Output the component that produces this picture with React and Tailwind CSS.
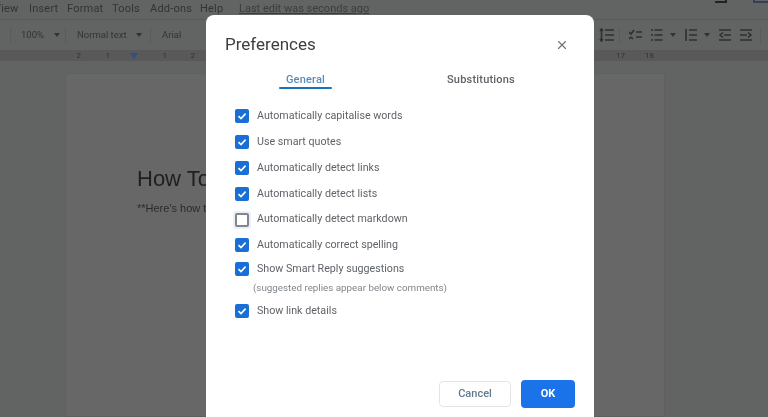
import { X } from 'lucide-react';

const menus = [
  { label: 'View', cls: 'w-[29px] -ml-[6px] mr-[6px]' },
  { label: 'Insert', cls: 'w-[38px]' },
  { label: 'Format', cls: 'w-[45px]' },
  { label: 'Tools', cls: 'w-[38px]' },
  { label: 'Add-ons', cls: 'w-[50px]' },
  { label: 'Help', cls: 'w-[39px]' },
];

const options = [
  { label: 'Automatically capitalise words', checked: true },
  { label: 'Use smart quotes', checked: true },
  { label: 'Automatically detect links', checked: true },
  { label: 'Automatically detect lists', checked: true },
  { label: 'Automatically detect markdown', checked: false },
  { label: 'Automatically correct spelling', checked: true },
];

function Caret() {
  return <span className="w-0 h-0 border-x-[3.5px] border-x-transparent border-t-[4px] border-t-[#333]" />;
}

function Separator({ cls }) {
  return <span className={`w-px h-4 bg-[#5a5b5a] ${cls}`} />;
}

// toolbar glyphs, drawn since the lucide ones are too thin and wide here
function ToolIcon({ d, cls }) {
  return (
    <svg width="13" height="14" viewBox="0 0 13 14" fill="none" stroke="currentColor" strokeWidth="1.6" className={cls}>
      <path d={d} />
    </svg>
  );
}

function Checkbox({ checked }) {
  if (!checked) {
    return (
      <span className="w-[14px] h-[14px] shrink-0 rounded-[2px] border-2 border-[#80868b] bg-white shadow-[0_0_0_2px_#e8f0fe]" />
    );
  }
  return (
    <span className="w-[14px] h-[14px] shrink-0 rounded-[2px] bg-[#1a6fd6] flex items-center justify-center">
      <svg width="10" height="10" viewBox="0 0 10 10" fill="none">
        <path d="M1.5 5.2 4 7.6 8.6 2.6" stroke="white" strokeWidth="1.6" />
      </svg>
    </span>
  );
}

function Option({ label, checked, rowCls }) {
  return (
    <div className={`flex items-center gap-2 ${rowCls}`}>
      <Checkbox checked={checked} />
      <span className="text-[10.7px] text-[#5f6368]">{label}</span>
    </div>
  );
}

export default function App() {
  return (
    <div className="relative w-[768px] h-[417px] overflow-hidden bg-[#626463] font-['Roboto',sans-serif]">
      {/* Docs behind the dialog */}
      <div className="flex flex-col h-full blur-[0.6px]">
        <div className="h-5 shrink-0 flex items-center text-[11px] tracking-[0.2px] text-[#333] border-b border-[#585958] relative">
          {menus.map((m) => (
            <span key={m.label} className={`shrink-0 ${m.cls}`}>{m.label}</span>
          ))}
          <span className="underline text-[11px] tracking-normal text-[#3c3c3c]">Last edit was seconds ago</span>
          <div className="ml-auto flex items-start gap-[26px] self-start">
            <span className="w-[12px] h-[3px] border-b-2 border-r-2 border-[#222]" />
            <span className="w-[15px] h-[3px] border-b-2 border-l-2 border-[#334155]" />
          </div>
        </div>

        <div className="h-[30px] shrink-0 flex items-center justify-between text-[9.5px] text-[#333]">
          <div className="flex items-center">
            <Separator cls="ml-[10px] mr-[10px]" />
            <span className="w-[33px]">100%</span>
            <Caret />
            <Separator cls="ml-[5px] mr-[11px]" />
            <span className="w-[59px]">Normal text</span>
            <Caret />
            <Separator cls="ml-[8px] mr-[11px]" />
            <span>Arial</span>
          </div>
          <div className="flex items-center text-[#2f2f2f]">
            <svg width="15" height="14" viewBox="0 0 15 14" fill="none" stroke="currentColor" strokeWidth="1.6">
              <path d="M2.5 1.5v11M1 3l1.5-2L4 3M1 11l1.5 2L4 11M6 2h9M6 7h9M6 12h9" />
            </svg>
            <Separator cls="ml-[5px] mr-[9px]" />
            <ToolIcon d="M0 4l2 2 3-4M7 4h6M0 11l2-2M2 9l2 2M7 9h6" cls="mr-[9px]" />
            <ToolIcon d="M0 2h2M0 7h2M0 12h2M3.5 2h8M3.5 7h8M3.5 12h8" cls="mr-[6px]" />
            <Caret />
            <span className="w-[9px]" />
            <ToolIcon d="M1 1v12M4 2h8M4 7h8M4 12h8" cls="mr-[6px]" />
            <Caret />
            <span className="w-[9px]" />
            <ToolIcon d="M0 2h12M5 7h7M0 12h12M4 4.5 1 7l3 2.5" cls="mr-[8px]" />
            <ToolIcon d="M0 2h12M0 7h7M0 12h12M8 4.5 11 7 8 9.5" />
            <Separator cls="ml-[7px] mr-[7px]" />
          </div>
        </div>

        <div className="h-[11px] shrink-0 bg-[#585958] flex items-center text-[8px] text-[#333]">
          <span className="w-[81px] shrink-0 text-right">2</span>
          <span className="w-[29px] shrink-0 text-right">1</span>
          <span className="w-[28px] shrink-0 flex justify-end">
            <span className="w-0 h-0 border-x-[4px] border-x-transparent border-t-[6px] border-t-[#2f4f85]" />
          </span>
          <span className="w-[29px] shrink-0 text-right">1</span>
          <span className="w-[28px] shrink-0 text-right">2</span>
          <span className="w-[430px] shrink-0 text-right">17</span>
          <span className="w-[29px] shrink-0 text-right">18</span>
        </div>

        <div className="flex-1 pt-[12px] pl-[65px] pr-[103px] flex min-h-0">
          <div className="w-full bg-[#666766] border border-[#5f605f] pl-[71px] pt-[92px]">
            <div className="font-['Liberation_Sans',sans-serif] text-[22px] leading-[26px] text-[#1f1f1f]">How To</div>
            <div className="font-['Liberation_Sans',sans-serif] text-[11px] mt-[8px] text-[#2b2b2b]">**Here's how to</div>
          </div>
        </div>
      </div>

      {/* Preferences dialog */}
      <div className="absolute left-[206px] top-[15px] w-[388px] h-[420px] rounded-lg bg-white flex flex-col">
        <div className="blur-[0.3px] flex flex-col h-full">
          <div className="flex items-center justify-between h-[58px] pt-[1px] pl-[19px] pr-[25px] shrink-0">
            <h1 className="text-[17px] text-[#3c4043]">Preferences</h1>
            <X size={14} strokeWidth={2} className="text-[#70757a]" />
          </div>

          <div className="flex h-[17px] -mt-[1px] shrink-0 text-[11px] font-medium tracking-[0.2px]">
            <div className="relative ml-[73px] w-[53px] text-center text-[#5b8bb8]">
              General
              <span className="absolute left-0 right-0 top-[15px] h-[2px] rounded-sm bg-[#1a73b8]" />
            </div>
            <div className="ml-[115px] w-[67px] text-center text-[#5f6368]">Substitutions</div>
          </div>

          <div className="pt-[14px] pl-[29px] flex flex-col">
            {options.map((o) => (
              <Option key={o.label} {...o} rowCls="h-[25.9px]" />
            ))}
            <Option label="Show Smart Reply suggestions" checked rowCls="h-[22px]" />
            <div className="h-4 pl-[18px] flex items-center text-[9.8px] text-[#80868b]">
              (suggested replies appear below comments)
            </div>
            <Option label="Show link details" checked rowCls="h-[30px]" />
          </div>

          <div className="flex items-center justify-end gap-[10px] pr-[19px] mt-[54px] text-[11px] font-medium">
            <button className="w-[72px] h-[26px] rounded border border-[#e2e5e8] bg-white text-[#5f7a8f]">Cancel</button>
            <button className="w-[54px] h-[28px] rounded bg-[#1a73e8] text-white font-bold">OK</button>
          </div>
        </div>
      </div>
    </div>
  );
}
